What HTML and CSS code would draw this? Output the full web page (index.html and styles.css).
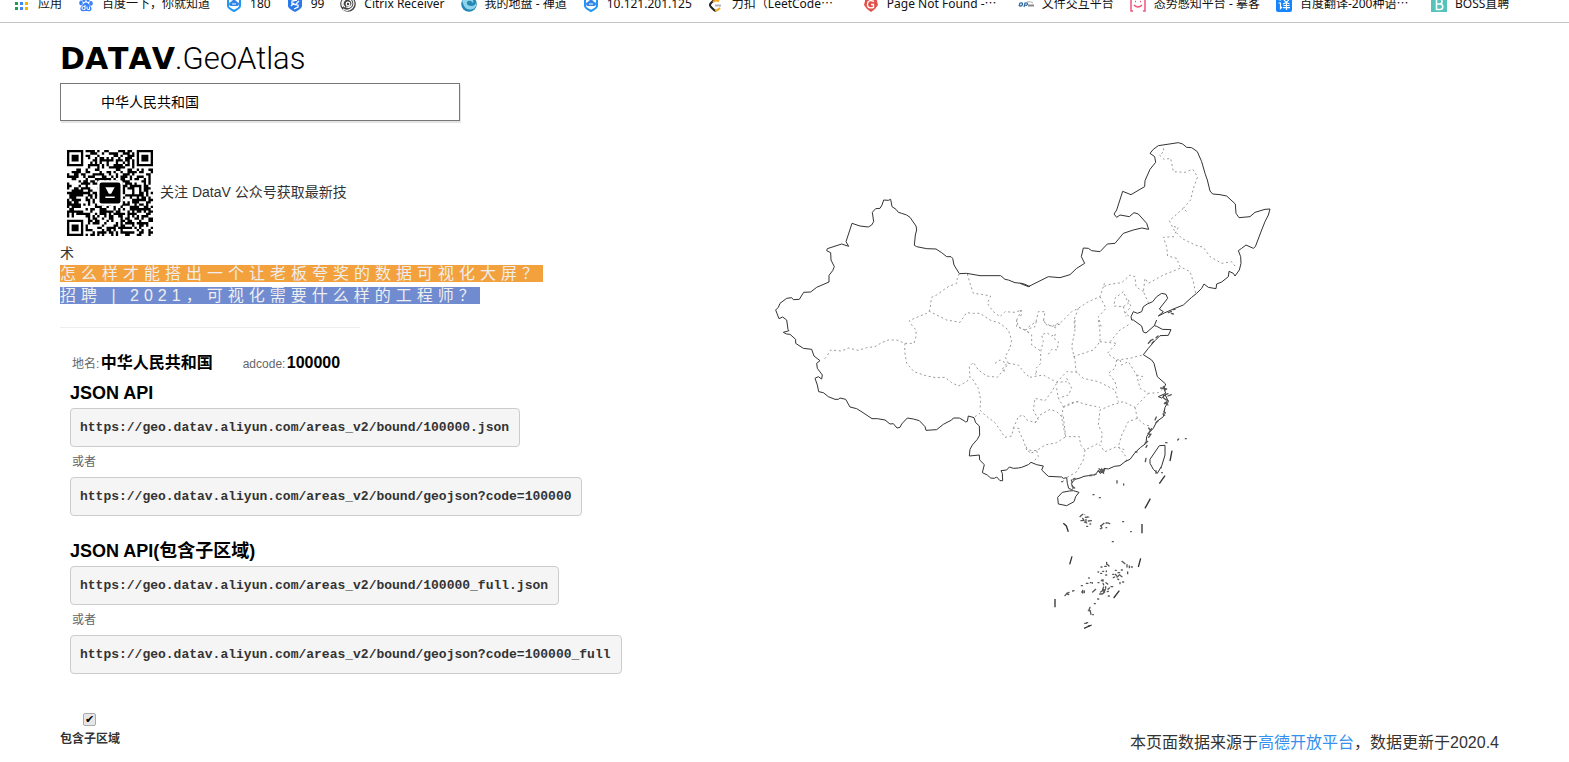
FILE: index.html
```html
<!DOCTYPE html>
<html lang="zh-CN">
<head>
    <meta charset="UTF-8">
    <title>DATAV.GeoAtlas</title>

    <link rel="stylesheet" href="styles.css">
</head>
<body>
    <nav class="bookmarks">
        <a class="bookmark" href="#">
            <svg class="icon" viewBox="0 0 16 16"><path fill="#1e9e50" d="M1 1h3v3H1zM1 6h3v3H1zM1 11h3v3H1z"/><path fill="#4285f4" d="M6 1h3v3H6zM6 6h3v3H6zM6 11h3v3H6z"/><path fill="#f4b400" d="M11 1h3v3h-3zM11 6h3v3h-3zM11 11h3v3h-3z"/></svg>
            <span>应用</span>
        </a>
        <a class="bookmark" href="#">
            <svg class="icon" viewBox="0 0 16 16"><g fill="#3b82f6"><ellipse cx="3" cy="7" rx="1.8" ry="2.4"/><ellipse cx="6" cy="3.4" rx="1.8" ry="2.5"/><ellipse cx="10" cy="3.4" rx="1.8" ry="2.5"/><ellipse cx="13" cy="7.4" rx="1.8" ry="2.3"/><path d="M8 6.6c2 0 2.800 2 4.400 3.600 2.400 2.400.8 5.400-1.800 5-1.800-.3-3.400-.3-5.200 0-2.800.4-4.200-2.800-1.800-5C5.200 8.600 6 6.600 8 6.600z"/></g><path fill="none" stroke="#fff" d="M7 9v4.500H5.500a1 1 0 0 1 0-3H7M9 10.500v2.500q0 .5 2.500.5v-3"/></svg>
            <span>百度一下，你就知道</span>
        </a>
        <a class="bookmark" href="#">
            <svg class="icon" viewBox="0 0 16 16"><path fill="#fff" stroke="#2196f3" stroke-width="2" d="M8 1l6 2v7c0 2-3 3.500-6 5-3-1.500-6-3-6-5V3z"/><path fill="#2f86e8" d="M5 10a2 2 0 0 1 0-4 3.200 3.200 0 0 1 6 0 2 2 0 0 1 0 4z"/><path stroke="#fff" d="M6 8h4"/></svg>
            <span>180</span>
        </a>
        <a class="bookmark" href="#">
            <svg class="icon" viewBox="0 0 16 16"><path fill="#2979e8" d="M8 0l7 2v8c0 2-3 4-7 6-4-2-7-4-7-6V2z"/><path fill="none" stroke="#fff" stroke-width="1.300" d="M10 4L5 5v3l6 1v2l-4 2M4 10l3-3M9 8l3-3"/></svg>
            <span>99</span>
        </a>
        <a class="bookmark" href="#">
            <svg class="icon" viewBox="0 0 16 16"><circle cx="8" cy="8" r="7.800" fill="#444"/><g fill="none" stroke="#fff" stroke-width="1.200"><path d="M3 11a6 6 0 1 1 9 1M5 11a4.300 4.300 0 1 1 6-1M3 13q5 3 9-1M6 11q3 1 5-1"/><circle cx="8" cy="8" r="1.800"/></g></svg>
            <span>Citrix Receiver</span>
        </a>
        <a class="bookmark" href="#">
            <svg class="icon" viewBox="0 0 16 16"><circle cx="8" cy="8" r="7.800" fill="#2589b5"/><path fill="#8ed4ea" d="M1 5q4-5 9-3 3 2 2 5-3-4-6-1-1 4 5 4 4-1 4-4 1 5-3 7-6 2-9-3-1-3-2-5z"/></svg>
            <span>我的地盘 - 禅道</span>
        </a>
        <a class="bookmark" href="#">
            <svg class="icon" viewBox="0 0 16 16"><path fill="#fff" stroke="#2196f3" stroke-width="2" d="M8 1l6 2v7c0 2-3 3.500-6 5-3-1.500-6-3-6-5V3z"/><path fill="#2f86e8" d="M5 10a2 2 0 0 1 0-4 3.200 3.200 0 0 1 6 0 2 2 0 0 1 0 4z"/><path stroke="#fff" d="M6 8h4"/></svg>
            <span>10.121.201.125</span>
        </a>
        <a class="bookmark bookmark-long" href="#">
            <svg class="icon" viewBox="0 0 16 16"><g fill="none" stroke-width="2"><path stroke="#222" d="M9 1L3 7q-2 2 0 4l3 3q1 1 2 0.500"/><path stroke="#f5a623" d="M5 6q3-3 6-.5M7 14.500q2 .5 5-2.500"/><path stroke="#b3b3b3" d="M7 9.500h6"/></g></svg>
            <span>力扣（LeetCode⋯</span>
        </a>
        <a class="bookmark bookmark-long" href="#">
            <svg class="icon" viewBox="0 0 16 16"><path fill="#e2514a" d="M2 1l3 1 3-2 3 2 3-1v4l1 4-3 4-4 3-4-3-3-4 1-4z"/><path fill="none" stroke="#fff" stroke-width="1.400" d="M11 5.500Q5 3 4.500 8t6 3.500V8.500H8"/></svg>
            <span>Page Not Found -⋯</span>
        </a>
        <a class="bookmark" href="#">
            <svg class="icon" viewBox="0 0 16 16"><path fill="none" stroke="#2c67a6" stroke-width="1.200" d="M1 10l1-3q3-.5 2.500 1.500T1 10M6 11l1-4q3-.5 2.500 1.200T7 9"/><path stroke="#888" stroke-width="2" d="M10 9.500h6"/><path stroke="#aaa" fill="none" d="M9 6q4-1 6 1"/></svg>
            <span>文件交互平台</span>
        </a>
        <a class="bookmark" href="#">
            <svg class="icon" viewBox="0 0 16 16"><path fill="none" stroke="#f2547d" stroke-width="1.500" d="M4 1H1v14h2M12 1h3v14h-2M5 5.500h1M10 5.500h1M4 9q4 4 8 0"/></svg>
            <span>态势感知平台 - 摹客</span>
        </a>
        <a class="bookmark bookmark-long" href="#">
            <svg class="icon" viewBox="0 0 16 16"><rect width="16" height="16" rx="2" fill="#1684fc"/><path fill="none" stroke="#fff" stroke-width="1.200" d="M3 3l1.500 1.500M2.500 7h2v5.500L6 11M7 3.500h6q-2 3.500-6 4.500M8 4q2 3 5.500 4M10.500 7v7M7.500 9.500h6M7 11.700h7"/></svg>
            <span>百度翻译-200种语⋯</span>
        </a>
        <a class="bookmark" href="#">
            <svg class="icon" viewBox="0 0 16 16"><path fill="#53c3bc" d="M0 0h16v16H0z"/><path fill="none" stroke="#fff" stroke-width="1.600" d="M5.500 3v10.500h3.500a2.700 2.700 0 0 0 0-5.500H5.500h3a2.500 2.500 0 0 0 0-5z"/></svg>
            <span>BOSS直聘</span>
        </a>
    </nav>

    <div class="wrapper">
        <div class="side">
            <h1 class="logo"><b>DATAV</b>.GeoAtlas</h1>
            <input class="search" type="text" value="中华人民共和国" aria-label="搜索">

            <div class="follow">
                <svg class="qrcode" id="qrcode" viewBox="-3 -3 43 43" role="img" aria-label="公众号二维码">
                    <path id="qr-modules" d=""/>
                    <rect x="13" y="13" width="11" height="11" rx="1" fill="#fff"/>
                    <rect x="14" y="14" width="9" height="9" rx="1"/>
                    <path fill="#fff" d="M16.500 16h4l-1.500 2.800h-1zM16.500 20h4v.7h-4z"/>
                </svg>关注 DataV 公众号获取最新技术
            </div>
            <a class="ad ad-orange" href="#">怎么样才能搭出一个让老板夸奖的数据可视化大屏？</a>
            <a class="ad ad-blue" href="#">招聘 | 2021，可视化需要什么样的工程师？</a>
            <hr class="line">

            <div class="info">
                <div class="area">
                    <span>地名: <strong>中华人民共和国</strong></span>
                    <span>adcode: <strong>100000</strong></span>
                </div>
                <h2 class="api-title">JSON API</h2>
                <pre class="api">https://geo.datav.aliyun.com/areas_v2/bound/100000.json</pre>
                <p class="or">或者</p>
                <pre class="api">https://geo.datav.aliyun.com/areas_v2/bound/geojson?code=100000</pre>
                <h2 class="api-title api-title-full">JSON API(包含子区域)</h2>
                <pre class="api">https://geo.datav.aliyun.com/areas_v2/bound/100000_full.json</pre>
                <p class="or">或者</p>
                <pre class="api">https://geo.datav.aliyun.com/areas_v2/bound/geojson?code=100000_full</pre>
            </div>

            <label class="include">
                <input class="check" type="checkbox" checked>
                包含子区域
            </label>
        </div>

        <div class="main">
            <svg class="map" viewBox="0 0 1560 1530" role="img" aria-label="中华人民共和国">
                <!-- 国界 -->
                <g class="border">
                    <path d="M810 470L795 463 785 460 765 458 745 450 735 448 722 437 660 437 620 430 598 431 582 405 578 385 573 380 560 380 545 368 528 357 500 356 470 350 463 346 466 315 470 300 468 288 450 262 440 255 425 250 415 247 408 238 396 230 392 208 385 211 371 210 366 225 360 235 347 236 337 247 341 275 335 285 325 291 300 288 276 280 258 335 266 349 245 342 202 356 200 362 212 368 213 390 223 410 218 422 207 436 207 456 170 472 152 486 131 487 118 508 100 509 95 503 80 505 60 520 55 532 47 540 57 566 68 561 80 570 84 598 87 602 70 607 80 612 90 613 107 628 107 640 130 655 155 658 162 678 180 692 170 700 172 715 187 735 185 747 175 740 165 745 172 765 176 785 190 788 205 800 225 808 235 808 240 804 257 808 270 831 290 836 306 846 336 866 352 866 375 870 390 882 400 881 411 894 420 892"/>
                    <path transform="translate(420 570)" d="M0 322L5 312 22 294 40 297 58 302 75 320 78 331 110 329 130 313 155 300 160 294 178 294 192 302 197 306 202 304 205 288 222 293 227 308 238 318 239 345 232 358 217 375 210 388 208 408 238 405 239 420 253 434 247 458 262 465 272 474 283 475 290 471 300 482 308 482 307 460 303 452 320 450 328 441 340 445 355 444 365 442 385 434 393 427 410 434 430 438 425 450 445 469 485 471 490 475 500 473 502 490 506 505 515 509 520 505 514 490 525 478 540 474"/>
                    <path transform="translate(780 570)" d="M180 474L192 469 205 467 212 465 225 465 235 452 240 460 250 455 252 445 265 447 283 439 300 437 315 425 330 418 345 398 362 382 378 370 380 350 390 335 400 325 410 305 430 290 435 262 445 245 436 225 425 234 415 230 437 220 432 205 437 192 412 170 402 130 395 120 370 104 385 85 405 62 420 47 445 46 453 29 427 28 410 19 403 17 378 39 370 36 365 18 340 0M403 17L410 0"/>
                    <path transform="translate(780 0)" d="M415 558L435 548 465 535 490 525 515 502 530 490 545 475 552 462 565 472 588 476 590 462 605 456 615 448 625 440 627 424 640 430 645 438 658 420 663 400 662 380 655 362 665 355 678 345 700 355 706 350 725 300 735 275 745 255 750 237 735 238 705 247 690 260 657 263 648 250 646 222 633 210 620 198 600 194 578 192 570 183 562 150 555 130 545 95 532 65 515 53 500 52 488 42 475 38 415 47 400 58 390 70 404 80 407 97 390 118 375 152 374 170 360 178 333 194 308 184 290 240 282 252 290 262 300 255 328 260 342 248 355 252 380 280 386 298 365 294 340 300 310 310 285 340 262 342 240 365 215 362 205 355 190 354 184 380 194 400 170 415 150 434 120 443 85 440 25 470 0 460M415 558L430 545 418 537 443 505 438 493 425 490 410 500 398 515 382 522 370 530 365 545 352 550 340 545 333 560 335 570 340 570"/>
                    <path transform="translate(810 900)" d="M130 182L147 187 137 200 132 215 110 227 85 222 83 202 97 187 118 183ZM388 47L405 46 405 75 395 108 382 130 370 118 360 100 360 88Z"/>
                </g>
                <!-- 省界 -->
                <g class="province">
                    <path d="M598 431L592 445 590 460 565 470 550 480 530 495 515 502 512 520 510 540 500 550 470 562 448 572 455 585 468 600 468 620 462 640 435 640 410 630 385 630 365 638 345 650 320 653 295 661 265 654 245 663 212 660 200 680 190 690"/>
                    <path d="M435 640L434 665 440 700 462 725 500 738 530 743 555 742 575 758 595 768 620 755 630 742 628 710 640 697 655 720 680 738 712 742 735 715 745 700 735 680 750 655 755 630 745 600 720 580 690 570 660 550 640 550 620 548 600 577 560 570 530 555 505 542"/>
                    <path d="M622 432L630 460 640 490 665 493 692 498 682 520 700 545 720 560 735 545 765 547 785 540 770 570 775 590 808 608M745 700L775 705 795 730 810 742M705 700L720 690 740 700 725 720 740 725"/>
                    <path transform="translate(420 570)" d="M218 178L235 205 242 240 240 270 255 285 285 308 300 330 315 352 335 348 340 325 365 325M225 290L240 280M390 172L400 170 430 165 470 187 500 185M340 325L355 290 370 285 380 300 405 308 420 285 450 268 470 275 485 290 490 320 497 350 470 368 435 375 410 392 380 390 370 360 355 330M405 308L415 300 400 270 405 235 435 242 455 215 470 190M350 0L350 20 375 30 395 45 395 75 425 95M445 103L455 88 472 90 475 65 462 55 466 42 455 48 440 38 425 45 430 65 422 95 422 130 408 145 410 165 400 155M375 30L405 20 410 0M430 0L440 15 455 18 470 25 465 15 485 12M470 187L500 155 540 157M500 175L515 205 505 225 475 235 470 205M485 290L490 260 475 235M490 260L515 248 540 243M410 392L415 410 400 425M378 380L390 400 405 395"/>
                    <path transform="translate(780 570)" d="M165 0L165 30 155 80 165 120 168 155 190 175 235 185 265 200 285 210 295 245M160 110L190 100 220 90 240 65 240 35 235 0M240 65L290 70 262 100 290 120 330 115 370 104M290 120L285 145 265 160 285 185 290 205M300 120L305 135 325 125 350 165 360 205 385 220 415 218 430 205M350 165L368 170 360 180M385 220L345 262 310 245 275 255 240 270 235 315 247 340 243 370M345 262L352 295 375 315 392 318M352 295L325 305 305 345 295 380 318 410M130 262L170 245 205 255 240 262M130 290L137 350 178 350 182 375 195 390 235 370 255 395 290 380 315 390M195 390L190 420 170 455 140 473M270 65L300 30 333 10M127 485L135 480M180 590L190 582 205 590 213 600"/>
                    <path transform="translate(780 0)" d="M430 55L432 65 418 75 432 88 452 85 460 125 495 127 518 118 533 140 520 175 512 210 490 235 500 245M490 235L448 272 462 300 485 325 525 345 550 352 570 380 605 400 635 395 645 408M462 290L475 292 465 310M462 320L430 322 440 350 443 378 470 385 480 410 510 425 520 455 527 490M480 415L430 435 385 460 375 445 370 485 385 518M370 485L348 470 345 440 330 435 305 458 270 463 250 470 255 455M250 470L240 500 205 515 175 535 155 545 125 575 95 590 70 575 75 545 55 545 48 575 20 595M240 500L258 535 235 560 245 595M175 535L162 570 165 600M310 485L285 505 282 528 310 530 325 520ZM325 510L333 530 315 550 333 562M310 530L318 560M0 540L5 550 0 565"/>
                </g>
                <!-- 岛屿 -->
                <g class="islands" transform="translate(810 900)">
                    <path d="M261 152v7M281 162v3M189 194h3M208 203h3M247 335h3M278 275h3M302 305h2M407 38h4M443 30l3-3M466 26h3M346 95l2-10M392 113h2M395 128h2M378 122v8M95 155h2M150 260l8-7M153 272l8-1M158 265l4 6M166 262l8-1M163 276l7 3M175 273l9-1M170 289h3M180 282h2M168 268v9M212 287l4 7M211 296h2M215 286l7-6M228 279h4M235 279l4 2M228 293h2M230 397v6M224 409h5M233 404l4 4M213 411h3M204 426h2M212 430h3M218 424h3M229 423v2M227 435h3M248 433h4M250 443l4-2M256 421h3M264 428h5M274 420h3M261 441l8-7M272 437l4 3M257 433l2 4M270 457v4M278 456h3M263 447l3 2M276 394l9 7M291 404v7M298 408v5M304 411h3M293 426v5M204 458h3M214 452l2-2M219 449v5M219 460l2 5M228 458l5 4M227 470v5M234 478l4-4M218 478l3-7M243 470h5M212 486l10-7M221 486l5-7M232 485l3-1M235 498h3M209 492h8M218 491l6-5M188 486l9-8M187 458v2M181 458h2M169 460h5M176 444h2M154 467h3M158 481v8M163 488v-5M155 486h2M128 483l4-1M105 497l5-6 6 3M111 490l6-3M203 507h3M193 521h3M177 540l3-8M181 545l2 8M175 542h6M188 554h2M164 580h5M170 578h3M175 588h3"/>
                    <path d="M205 122l5 4 5-9 6 8 3-7M207 116l14 14M178 137h6M194 133h4M289 91h3M316 66h5M345 40l7-5M348 52l3-6M353 34l-6 5M356 22l7-10M354 10l7 5M357 8l8-12M362 2l-6-8M375-30l4-9M378-22l6-5M403-79l4-4M406-92l8 4M404-81l10 6M411-86l-3 8M400-103l14-6M392-126l18 3M400-130l6 10M414-102l10-4M398-98l8 6M399-48l5 4M402-56l4 5M361-268l8-4M366-260l6-6M355-260l6-6M378-277l6-5M127 158l-3-8M135 145l-6 3M126 168l8 6M415-352l9-4M424-350l6 2M429-361l6-1"/>
                </g>
                <!-- 九段线 -->
                <path class="dashes" transform="translate(810 900)" d="M426 62L420 93M405 137L388 161M361 206L345 235M336 282V310M332 385L325 411M268 482L251 504M162 595L185 585M75 507V532M126 379L119 403M100 280L109 288 115 305"/>
            </svg>
            <p class="source">本页面数据来源于<a href="#">高德开放平台</a>，数据更新于2020.4</p>
        </div>
    </div>

    <script>
        var size = 37;
        var seed = 2021;
        var d = "";

        function random() {
            seed = (seed * 1103 + 12345) % 65536;
            return seed / 65536;
        }

        function finder(x, y) {
            return "M" + x + " " + y + "h7v7h-7zm1 1v5h5v-5zm1 1h3v3h-3z";
        }

        for (var y = 0; y < size; y++) {
            for (var x = 0; x < size; x++) {
                var dark = random() < 0.5;
                var corner = (x < 8 && y < 8) || (x > 28 && y < 8) || (x < 8 && y > 28);
                if (dark && !corner) {
                    d += "M" + x + " " + y + "h1v1h-1z";
                }
            }
        }

        d += finder(0, 0) + finder(30, 0) + finder(0, 30);
        document.getElementById("qr-modules").setAttribute("d", d);
    </script>
</body>
</html>
```
FILE: styles.css
```css
* {
    box-sizing: border-box;
}

body {
    margin: 0;
    font-family: "Liberation Sans", "Noto Sans CJK SC", sans-serif;
    font-size: 14px;
    line-height: 20px;
    color: #333;
    background-color: #fff;
}

a {
    text-decoration: none;
}

.bookmarks {
    display: flex;
    align-items: flex-end;
    gap: 16px;
    height: 23px;
    padding: 0 14px 9px;
    border-bottom: 1px solid #c4c4c4;
    overflow: hidden;
    font-family: "Noto Sans", "Noto Sans CJK SC", sans-serif;
    font-size: 12px;
    line-height: 18px;
}

.bookmark {
    display: flex;
    flex: none;
    align-items: center;
    gap: 8px;
    color: #111;
    white-space: nowrap;
}

.bookmark-long {
    width: 139px;
}

.icon {
    flex: none;
    width: 16px;
    height: 16px;
}

.wrapper {
    display: flex;
    padding: 20px 70px 0 60px;
}

.side {
    flex: none;
    width: 600px;
}

.logo {
    margin: 0;
    font-family: Roboto, sans-serif;
    font-size: 31px;
    font-weight: 300;
    line-height: 32px;
    color: #000;
}

.logo b {
    font-family: "DejaVu Sans", sans-serif;
    font-size: 30px;
    font-weight: 700;
    font-kerning: none;
}

.search {
    display: block;
    width: 400px;
    height: 38px;
    margin-top: 8px;
    padding: 0 40px 2px;
    border: 1px solid #777;
    box-shadow: 1px 2px 0 #e4e4e4;
    font-family: inherit;
    font-size: 14px;
    color: #000;
}

.follow {
    width: 300px;
    margin-top: 22px;
}

.qrcode {
    width: 100px;
    height: 100px;
    vertical-align: middle;
}

.ad {
    display: block;
    width: fit-content;
    margin-bottom: 5px;
    font-size: 16px;
    line-height: 17px;
    letter-spacing: 5px;
    white-space: nowrap;
    color: #eee;
}

.ad-orange {
    margin-top: 2px;
    background-color: #f3a13c;
}

.ad-blue {
    background-color: #708bd0;
}

.line {
    width: 300px;
    margin: 23px 0 25px;
    border: 0;
    border-top: 1px solid #eee;
}

.info {
    padding-left: 10px;
}

.area {
    display: flex;
    gap: 30px;
    padding-left: 2px;
    font-size: 12px;
    color: #666;
}

.area strong {
    margin-left: -2px;
    font-size: 16px;
    color: #000;
}

.api-title {
    margin: 9px 0 5px;
    font-size: 18px;
    line-height: 20px;
    color: #000;
}

.api-title-full {
    margin-top: 25px;
}

.api {
    width: fit-content;
    margin: 0;
    padding: 9px 10px 9px 9px;
    border: 1px solid #ccc;
    border-radius: 4px;
    background-color: #f5f5f5;
    font-family: "Liberation Mono", monospace;
    font-size: 13px;
    font-weight: 700;
    line-height: 19px;
}

.or {
    margin: 5px 2px;
    font-size: 12px;
    line-height: 20px;
    color: #666;
}

.include {
    display: flex;
    flex-direction: column;
    align-items: center;
    width: fit-content;
    margin-top: 39px;
    font-size: 12px;
    font-weight: 700;
}

/* 灰色复选框 */
.check {
    display: grid;
    place-items: center;
    appearance: none;
    width: 13px;
    height: 13px;
    margin: 0 2px 3px 0;
    border: 1px solid #aaa;
    border-radius: 2px;
    background-color: #e6e6e6;
}

.check:checked::before {
    content: "✔";
    font-size: 11px;
    line-height: 11px;
}

.main {
    flex: 1;
    padding: 87px 0 0 100px;
}

.map {
    display: block;
    width: 520px;
    height: 510px;
    fill: none;
    stroke: #333;
    stroke-width: 3;
}

.province {
    stroke: #999;
    stroke-dasharray: 6 8;
}

.islands {
    stroke: #555;
    stroke-width: 4;
    stroke-linecap: round;
}

.dashes {
    stroke-width: 4;
}

.source {
    margin: 88px 0 0;
    font-size: 16px;
    line-height: 30px;
    text-align: right;
}

.source a {
    color: #3591ec;
}
```
